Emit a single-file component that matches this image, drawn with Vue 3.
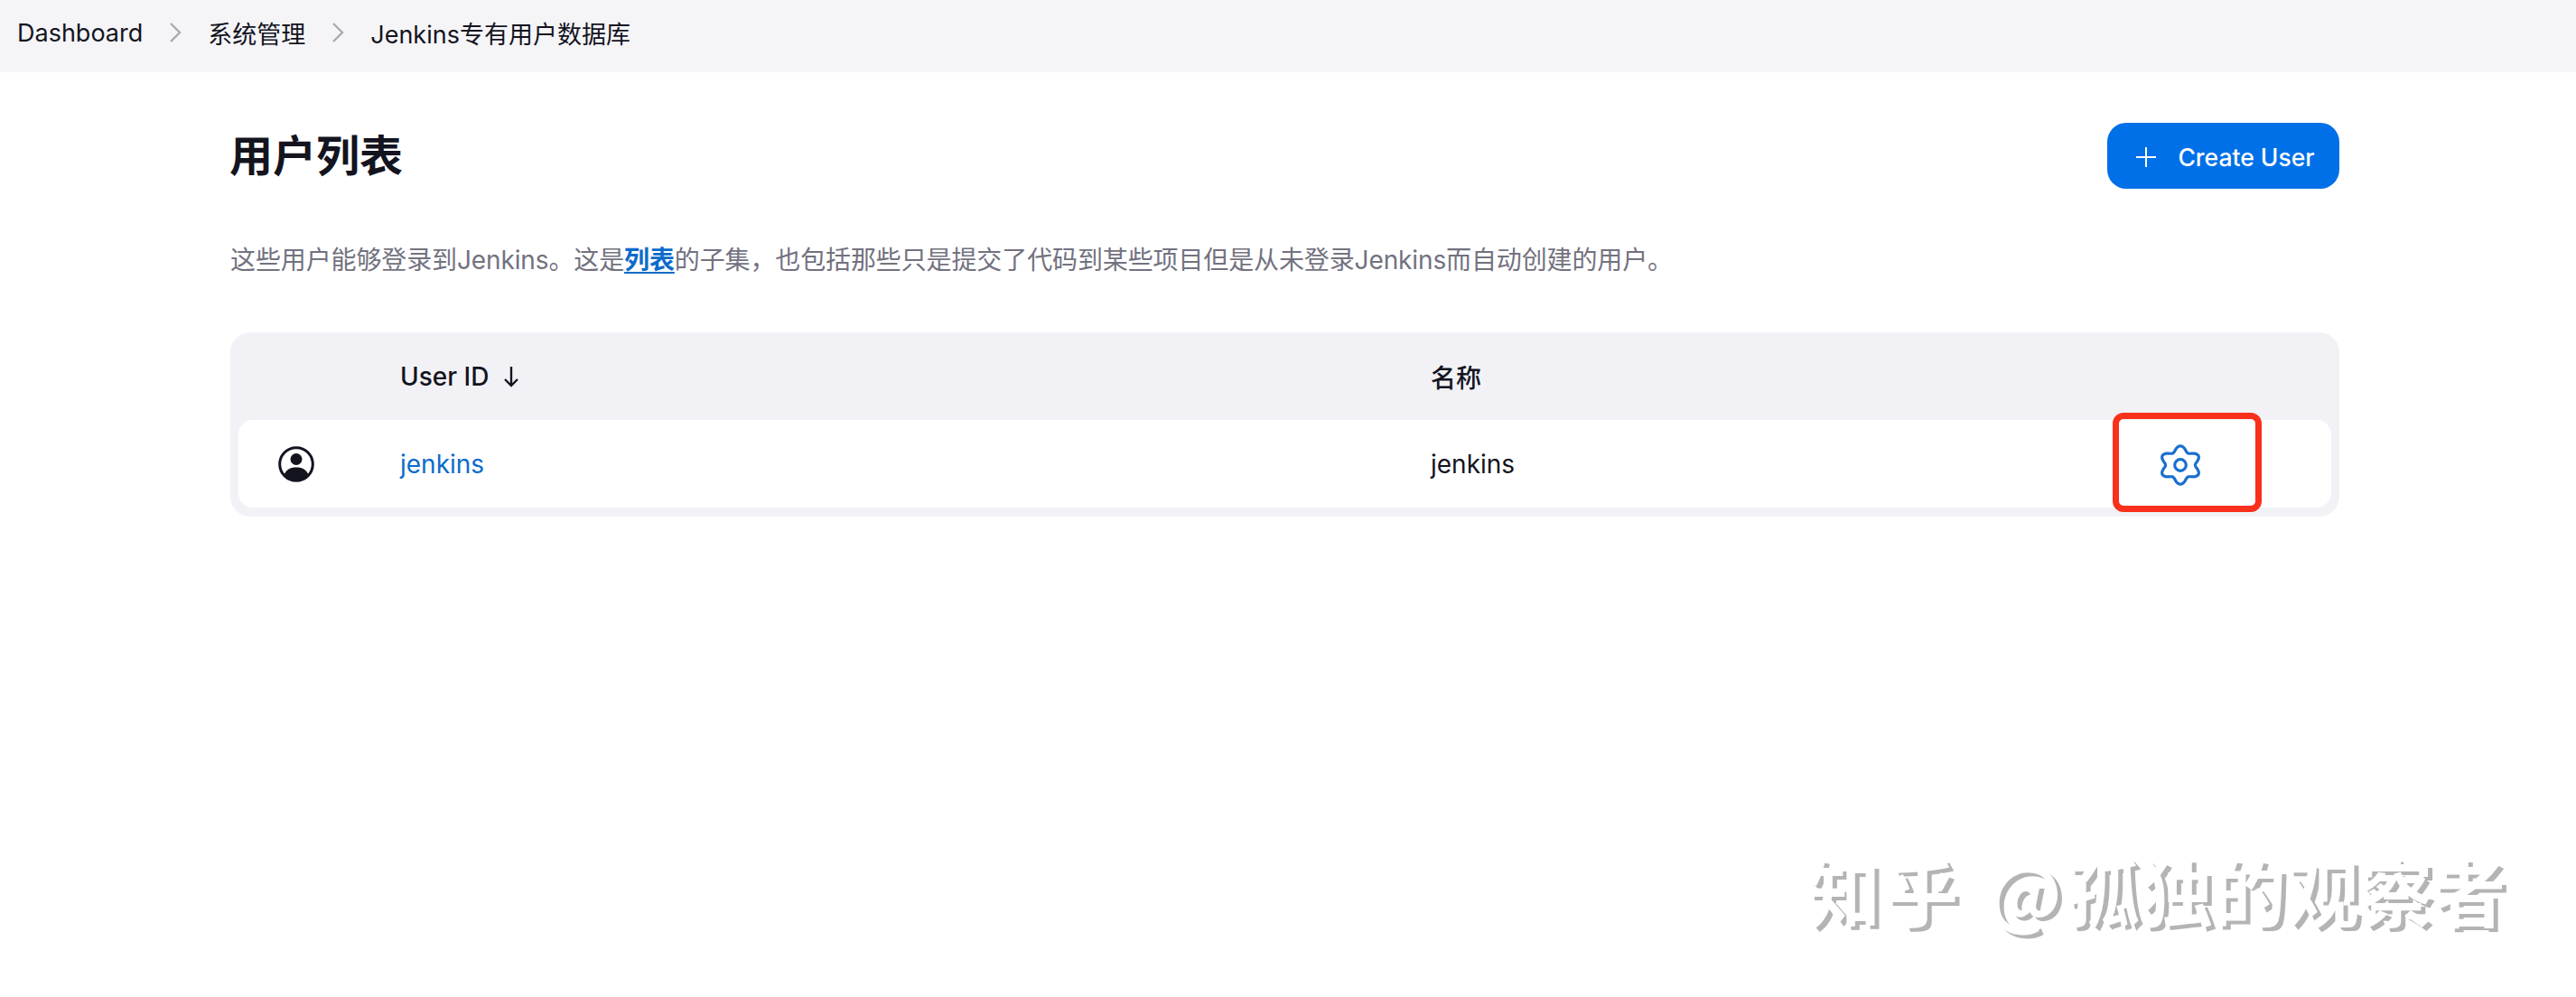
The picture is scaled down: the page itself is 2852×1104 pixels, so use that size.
<script setup>
const crumbs = ['Dashboard', '系统管理', 'Jenkins专有用户数据库']

// Six-lobed gear outline around the centre of a 44x46 box.
const gearPath = (() => {
  const pts = []
  for (let i = 0; i < 120; i++) {
    const t = (i / 120) * Math.PI * 2
    const r = 18.2 + 3 * Math.cos(6 * t)
    pts.push(`${(22 + r * Math.sin(t) * 1.08).toFixed(2)} ${(23 - r * Math.cos(t)).toFixed(2)}`)
  }
  return `M${pts.join('L')}Z`
})()
</script>

<template>
  <div class="page">
    <nav class="crumbs">
      <template v-for="(c, i) in crumbs" :key="c">
        <span class="crumb">{{ c }}</span>
        <svg v-if="i < crumbs.length - 1" class="sep" viewBox="0 0 14 24" width="14" height="24">
          <path d="M2 2l10 10L2 22" fill="none" stroke="#a9a9b1" stroke-width="2.400" />
        </svg>
      </template>
    </nav>

    <main class="content">
      <header class="head">
        <h1>用户列表</h1>
        <button class="create">
          <svg viewBox="0 0 24 24" width="24" height="24">
            <path d="M12 1v22M1 12h22" fill="none" stroke="#fff" stroke-width="2" />
          </svg>
          <span>Create User</span>
        </button>
      </header>

      <p class="desc">这些用户能够登录到Jenkins。这是<a>列表</a>的子集，也包括那些只是提交了代码到某些项目但是从未登录Jenkins而自动创建的用户。</p>

      <section class="table">
        <div class="row thead">
          <span></span>
          <span class="sort">User ID
            <svg viewBox="0 0 20 26" width="20" height="26">
              <path d="M10 2v21M3 16l7 7 7-7" fill="none" stroke="#14141f" stroke-width="2.400" />
            </svg>
          </span>
          <span>名称</span>
          <span></span>
        </div>
        <div class="row tbody">
          <svg class="avatar" viewBox="0 0 40 40" width="40" height="40">
            <circle cx="20" cy="20" r="18.300" fill="#fff" stroke="#14141f" stroke-width="3" />
            <circle cx="20" cy="14.500" r="6.500" fill="#14141f" />
            <path d="M6.500 32c2-6 7-8.500 13.500-8.500S31.500 26 33.500 32c-3.500 4-8 6-13.500 6s-10-2-13.500-6z" fill="#14141f" />
          </svg>
          <a class="uid">jenkins</a>
          <span>jenkins</span>
          <svg class="gear" viewBox="0 0 44 46" width="44" height="46">
            <path :d="gearPath" fill="none" stroke="#1a6fd0" stroke-width="3.200" stroke-linejoin="round" />
            <circle cx="22" cy="23" r="6.300" fill="none" stroke="#1a6fd0" stroke-width="3.200" />
          </svg>
        </div>
        <div class="mark"></div>
      </section>
    </main>

    <div class="watermark"><span class="zh">知乎</span><span class="at">@</span>孤独的观察者</div>
  </div>
</template>

<style scoped>
.page {
  position: relative;
  width: 2852px;
  height: 1104px;
  background: #fff;
  overflow: hidden;
  font-family: Inter, "Noto Sans CJK SC", sans-serif;
  color: #14141f;
}
.crumbs {
  height: 80px;
  padding: 0 0 8px 19px;
  box-sizing: border-box;
  background: #f5f5f7;
  display: flex;
  align-items: center;
  gap: 29px;
  font-size: 27px;
  font-weight: 400;
}
.sep { flex: none; }
.content {
  padding: 56px 262px 0 255px;
}
.head {
  display: flex;
  align-items: center;
  justify-content: space-between;
  height: 73px;
}
h1 {
  margin: 0 0 0 -1px;
  font-size: 48px;
  line-height: 73px;
  font-weight: 600;
}
.create {
  width: 257px;
  height: 73px;
  display: flex;
  align-items: center;
  justify-content: center;
  gap: 23px;
  border: 0;
  border-radius: 21px;
  background: #0070e8;
  color: #fff;
  font-family: inherit;
  font-size: 26.500px;
  font-weight: 500;
  padding: 2px 0 0 4px;
}
.desc {
  margin: 59px 0 0;
  font-size: 28px;
  line-height: 40px;
  letter-spacing: -0.120px;
  color: #72727f;
}
.desc a {
  color: #0b6bcb;
  font-weight: 600;
  text-decoration: underline;
  text-underline-offset: 3px;
}
.table {
  position: relative;
  margin-top: 60px;
  padding: 0 9px 10px;
  background: #f2f2f6;
  border-radius: 22px;
}
.row {
  display: grid;
  grid-template-columns: 179px 1141px 821px 1fr;
  align-items: center;
  font-size: 28px;
}
.thead {
  height: 97px;
  font-weight: 500;
}
.sort {
  display: inline-flex;
  align-items: center;
  gap: 15px;
}
.tbody {
  height: 97px;
  background: #fff;
  border-radius: 16px;
  font-weight: 400;
}
.avatar {
  justify-self: center;
  transform: translateX(-26px);
}
.uid {
  color: #0b6bcb;
}
.gear {
  margin-left: -13px;
  transform: translateY(1px);
}
.mark {
  position: absolute;
  left: 2084px;
  top: 89px;
  width: 165px;
  height: 110px;
  box-sizing: border-box;
  border: 7px solid #f9301c;
  border-radius: 12px;
}
.watermark {
  position: absolute;
  left: 2001px;
  top: 925px;
  display: flex;
  font-family: "Noto Sans CJK SC", sans-serif;
  font-size: 81px;
  line-height: 120px;
  font-weight: 700;
  white-space: nowrap;
  color: #fff;
  text-shadow: 5px 4px 0 #b4b4b4;
}
.zh {
  letter-spacing: 5px;
  width: 200px;
}
.at {
  width: 87px;
}
</style>
